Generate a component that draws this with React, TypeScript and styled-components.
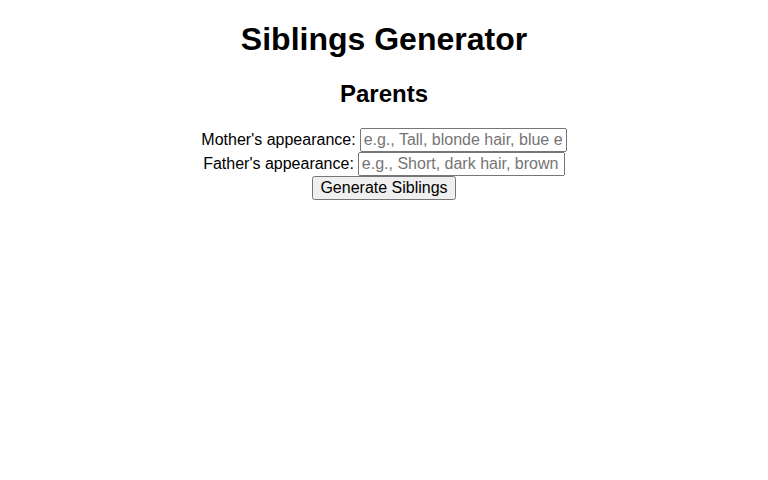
import React, { useState } from 'react';
import styled, { createGlobalStyle } from 'styled-components';

const GlobalStyle = createGlobalStyle`
  body {
    margin: 0;
    background: #fff;
    color: #000;
    font-family: "Liberation Sans", Arial, sans-serif;
  }
`;

const Page = styled.div`
  text-align: center;
  padding: 0 8px;
`;

const Title = styled.h1`
  font-size: 32px;
  font-weight: bold;
  margin: 21.44px 0;
`;

const SectionTitle = styled.h2`
  font-size: 24px;
  font-weight: bold;
  margin: 19.92px 0;
`;

const Field = styled.div`
  font-size: 16px;
`;

const Label = styled.label`
  margin-right: 4px;
`;

const TextInput = styled.input`
  font: inherit;
  box-sizing: border-box;
  width: 207px;
`;

const Button = styled.button`
  font: inherit;
`;

const App: React.FC = () => {
  const [mother, setMother] = useState('');
  const [father, setFather] = useState('');

  return (
    <Page>
      <GlobalStyle />
      <Title>Siblings Generator</Title>
      <SectionTitle>Parents</SectionTitle>
      <Field>
        <Label htmlFor="mother">Mother's appearance:</Label>
        <TextInput
          id="mother"
          type="text"
          value={mother}
          placeholder="e.g., Tall, blonde hair, blue eyes"
          onChange={e => setMother(e.target.value)}
        />
      </Field>
      <Field>
        <Label htmlFor="father">Father's appearance:</Label>
        <TextInput
          id="father"
          type="text"
          value={father}
          placeholder="e.g., Short, dark hair, brown eyes"
          onChange={e => setFather(e.target.value)}
        />
      </Field>
      <Button type="button">Generate Siblings</Button>
    </Page>
  );
};

export default App;
